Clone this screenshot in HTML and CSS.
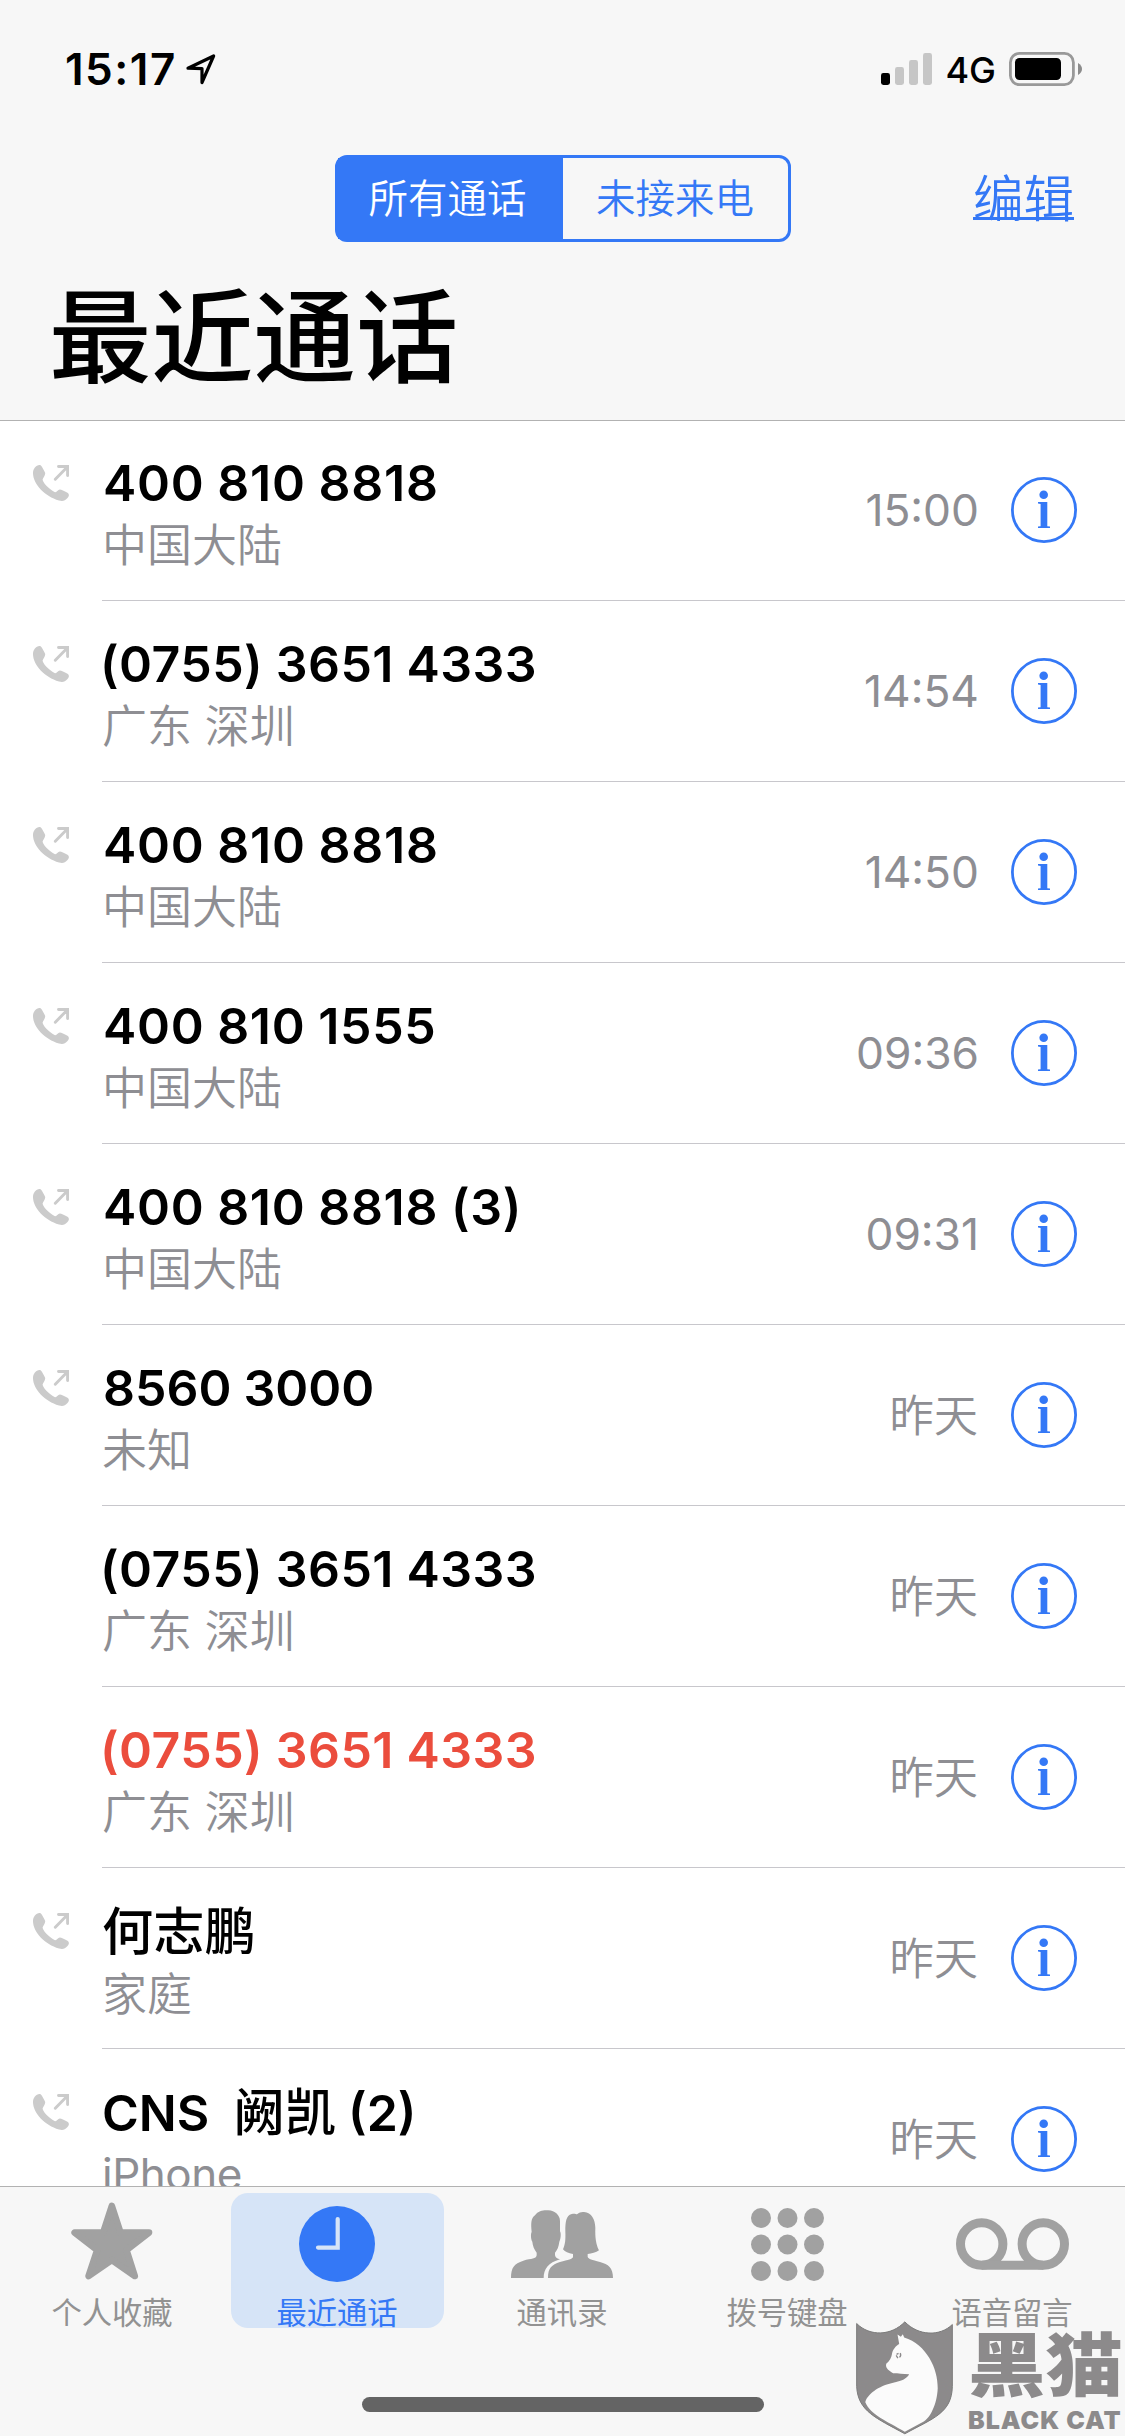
FILE: index.html
```
<!DOCTYPE html>
<html lang="zh-CN">
<head>
<meta charset="utf-8">
<title>最近通话</title>
<link rel="stylesheet" href="styles.css">
</head>
<body>
<svg class="defs" aria-hidden="true">
  <symbol id="outgoing" viewBox="0 0 36 36">
    <path fill="#cbcbcb" d="M0 8C0 4 3 0 6.5 0C8.5 0 9 2 12 7.5C13 9.8 10 12.5 9.6 14.5C9.5 17 15 23.5 22 27.3C23.5 27.3 25 24.8 26.8 24.5C28.5 24.5 31 26 34.5 27.8C36.4 29 36.3 30.5 34.5 33C32 36 29.5 36.3 26 35.5C12 31.5 0 19 0 8Z"/>
    <path fill="none" stroke="#cbcbcb" stroke-width="2.9" stroke-linecap="round" d="M22.3 14.2L34.5 1.8M25.5 1.5H34.6V10.6"/>
  </symbol>
  <symbol id="info" viewBox="0 0 66 66">
    <circle cx="33" cy="33" r="31.6" fill="none" stroke="#3478f6" stroke-width="2.8"/>
    <circle cx="32.7" cy="17.8" r="4.3" fill="#3478f6"/>
    <path fill="#3478f6" d="M27 25H36.3V49.3L39 49.5V51H27V49.5L29.6 49.3V26.9L27 26.6Z"/>
  </symbol>
</svg>
<div class="phone">
  <header class="header">
    <div class="status">
      <div class="status-left">
        <span class="clock">15:17</span>
        <svg class="location" viewBox="0 0 30 31"><path fill="none" stroke="#000" stroke-width="3.2" stroke-linejoin="round" d="M2 14.2L27.6 2L16 28.5V14.6Z"/></svg>
      </div>
      <div class="status-right">
        <svg class="signal" viewBox="0 0 51 32"><rect y="20" width="9" height="12" rx="2.4"/><g fill="#c6c6c6"><rect x="14" y="14" width="9" height="18" rx="2.4"/><rect x="28" y="7" width="9" height="25" rx="2.4"/><rect x="42" width="9" height="32" rx="2.4"/></g></svg>
        <span class="network">4G</span>
        <svg class="battery" viewBox="0 0 73 34"><rect x="1.4" y="1.4" width="63" height="31.2" rx="9" fill="none" stroke="#999" stroke-width="2.8"/><rect x="6" y="6" width="46" height="22" rx="4.5"/><path fill="#8c8c8c" d="M69 11Q73 13.500 73 17T69 23Z"/></svg>
      </div>
    </div>
    <nav class="nav">
      <div class="segmented">
        <span class="segment segment-on">所有通话</span>
        <span class="segment">未接来电</span>
      </div>
      <a class="edit">编辑</a>
    </nav>
    <h1 class="title">最近通话</h1>
  </header>

  <main class="list">
    <div class="call"><svg class="out"><use href="#outgoing"/></svg><div class="who"><div class="name">400 810 8818</div><div class="place">中国大陆</div></div><span class="time">15:00</span><svg class="info"><use href="#info"/></svg></div>
    <div class="call"><svg class="out"><use href="#outgoing"/></svg><div class="who"><div class="name area">(0755) 3651 4333</div><div class="place">广东 深圳</div></div><span class="time">14:54</span><svg class="info"><use href="#info"/></svg></div>
    <div class="call"><svg class="out"><use href="#outgoing"/></svg><div class="who"><div class="name">400 810 8818</div><div class="place">中国大陆</div></div><span class="time">14:50</span><svg class="info"><use href="#info"/></svg></div>
    <div class="call"><svg class="out"><use href="#outgoing"/></svg><div class="who"><div class="name snug">400 810 1555</div><div class="place">中国大陆</div></div><span class="time">09:36</span><svg class="info"><use href="#info"/></svg></div>
    <div class="call"><svg class="out"><use href="#outgoing"/></svg><div class="who"><div class="name snug">400 810 8818 (3)</div><div class="place">中国大陆</div></div><span class="time">09:31</span><svg class="info"><use href="#info"/></svg></div>
    <div class="call"><svg class="out"><use href="#outgoing"/></svg><div class="who"><div class="name tight">8560 3000</div><div class="place">未知</div></div><span class="time day">昨天</span><svg class="info"><use href="#info"/></svg></div>
    <div class="call"><div class="who"><div class="name area">(0755) 3651 4333</div><div class="place">广东 深圳</div></div><span class="time day">昨天</span><svg class="info"><use href="#info"/></svg></div>
    <div class="call"><div class="who"><div class="name area missed">(0755) 3651 4333</div><div class="place">广东 深圳</div></div><span class="time day">昨天</span><svg class="info"><use href="#info"/></svg></div>
    <div class="call"><svg class="out"><use href="#outgoing"/></svg><div class="who"><div class="name contact"><span class="han">何志鹏</span></div><div class="place">家庭</div></div><span class="time day">昨天</span><svg class="info"><use href="#info"/></svg></div>
    <div class="call"><svg class="out"><use href="#outgoing"/></svg><div class="who"><div class="name contact">CNS&nbsp; <span class="han">阙凯</span> (2)</div><div class="place latin">iPhone</div></div><span class="time day">昨天</span><svg class="info"><use href="#info"/></svg></div>
  </main>

  <footer class="tabbar">
    <div class="tab">
      <div class="icon"><svg class="star" width="82" height="78" viewBox="33 20 247 233"><path fill="#a1a1a1" stroke="#a1a1a1" stroke-width="20" stroke-linejoin="round" d="M156 31L182 111H268L200 164L225 242L156 194L86 242L112 164L44 111H130Z"/></svg></div>
      <span class="label">个人收藏</span>
    </div>
    <div class="tab tab-on">
      <div class="icon"><svg width="76" height="76" viewBox="0 0 76 76"><circle cx="38" cy="38" r="38" fill="#3478f6"/><path fill="none" stroke="#d6e4f7" stroke-width="4.2" stroke-linecap="round" stroke-linejoin="miter" d="M38.700 13V41.600H19"/></svg></div>
      <span class="label">最近通话</span>
    </div>
    <div class="tab">
      <div class="icon"><svg width="102" height="68" viewBox="33 42 306 204"><g fill="#a1a1a1"><path d="M33 246C33 215 42 203 70 194C95 187 108 190 110 178V170C103 160 98 150 97 137C92 130 92 112 95 108C93 85 92 66 105 58C115 42 135 42 145 43C165 44 180 58 180 75V106C184 112 182 130 178 137C176 152 172 162 165 170V178C167 186 172 188 180 190C145 200 131 220 131 246Z"/><path d="M144 246C144 215 155 207 180 198C205 190 218 190 219 182V174C205 172 195 168 189 160C196 145 197 130 196 105C196 80 198 58 215 54C225 52 226 54 231 55C238 49 245 47 252 48C275 50 285 70 286 95C285 125 288 145 297 163C288 170 275 173 263 174V182C266 190 275 190 300 198C325 205 339 215 339 246Z"/></g></svg></div>
      <span class="label">通讯录</span>
    </div>
    <div class="tab">
      <div class="icon"><svg width="73" height="73" viewBox="0 0 73 73" fill="#a1a1a1"><circle cx="10" cy="10" r="10"/><circle cx="36.500" cy="10" r="10"/><circle cx="63" cy="10" r="10"/><circle cx="10" cy="36.500" r="10"/><circle cx="36.500" cy="36.500" r="10"/><circle cx="63" cy="36.500" r="10"/><circle cx="10" cy="63" r="10"/><circle cx="36.500" cy="63" r="10"/><circle cx="63" cy="63" r="10"/></svg></div>
      <span class="label">拨号键盘</span>
    </div>
    <div class="tab">
      <div class="icon"><svg width="113" height="52" viewBox="0 0 113 52" fill="none" stroke="#a1a1a1" stroke-width="9"><circle cx="25.700" cy="26" r="21.200"/><circle cx="87.300" cy="26" r="21.200"/><path d="M25.700 47.200H87.300"/></svg></div>
      <span class="label">语音留言</span>
    </div>
    <div class="home"></div>
  </footer>

  <div class="watermark">
    <svg width="97" height="114" viewBox="18 18 292 342">
      <path fill="#8c8a8b" stroke="#7b7b7b" stroke-width="3" d="M20 25C60 65 125 62 165 20C205 62 270 65 308 28V215C306 295 250 310 165 357C80 310 24 290 20 215Z"/>
      <path fill="#fbfbfb" d="M46 262C50 240 85 212 130 203C155 199 170 192 178 178C160 176 145 178 130 175C120 168 105 160 109 146C120 137 125 125 126 118C128 105 138 92 148 87L143 58L153 65L159 57L163 67C230 88 265 160 264 220C262 270 240 310 222 320L165 351C110 318 62 300 46 262Z"/>
      <path fill="none" stroke="#8c8a8b" stroke-width="4" d="M139 121L144 129M151 114Q155 121 149 127M140 118L146 115"/>
    </svg>
    <div class="brand"><span class="brand-han">黑猫</span><span class="brand-latin">BLACK CAT</span></div>
  </div>
</div>
</body>
</html>
```
FILE: styles.css
```
* { box-sizing: border-box; }
body { margin: 0; background: #fff; color: #000; font-family: Inter, "Noto Sans CJK SC", sans-serif; }
svg { display: block; flex: none; }
.defs { position: absolute; width: 0; height: 0; }
.phone { position: relative; display: flex; flex-direction: column; width: 1125px; height: 2436px; overflow: hidden; }

.header { height: 421px; flex: none; background: #f7f7f7; border-bottom: 1px solid #b2b2b2; }
.status { display: flex; justify-content: space-between; align-items: center; height: 132px; padding: 6px 43px 0 65px; }
.status-left, .status-right { display: flex; align-items: center; }
.clock { font-size: 44px; font-weight: 600; letter-spacing: 1.5px; line-height: 60px; }
.location { width: 30px; height: 31px; margin-left: 9px; }
.signal { width: 51px; height: 32px; }
.network { font-size: 36px; font-weight: 450; line-height: 44px; margin: 2px 13px 0 13px; }
.battery { width: 73px; height: 34px; }

.nav { display: grid; grid-template-columns: 1fr 456px 1fr; align-items: center; height: 133px; padding: 0 51px; }
.segmented { grid-column: 2; display: grid; grid-template-columns: 1fr 1fr; height: 87px; border: 3px solid #3478f6; border-radius: 12px; }
.segment { display: flex; align-items: center; justify-content: center; color: #3478f6; font-size: 39.5px; font-weight: 350; line-height: 60px; }
.segment-on { background: #3478f6; color: #fff; padding-right: 5px; }
.edit { justify-self: end; color: #3478f6; font-size: 50.5px; font-weight: 350; line-height: 60px; text-decoration: underline; text-decoration-thickness: 3px; text-underline-offset: 0; text-decoration-skip-ink: none; }
.title { margin: 0; padding: 3px 0 0 49px; font-size: 102.3px; font-weight: 500; line-height: 140px; }

.list { flex: 1; min-height: 0; overflow: hidden; margin-top: -1px; }
.call { display: grid; grid-template-columns: 102px 1fr auto 147px; height: 181px; }
.out { grid-column: 1; grid-row: 1; width: 36px; height: 36px; margin: 45px 0 0 33px; }
.who { grid-column: 2 / 5; grid-row: 1; padding-top: 32px; border-bottom: 1px solid #c8c7cc; }
.name { margin-left: 1px; font-size: 50px; font-weight: 600; line-height: 62px; letter-spacing: .75px; word-spacing: -.5px; white-space: nowrap; }
.area { margin-left: -2px; letter-spacing: .45px; }
.snug { letter-spacing: .7px; }
.tight { letter-spacing: 0; }
.contact { margin-left: 0; letter-spacing: 0; }
.missed { color: #eb4d3d; }
.han { font-size: 51.2px; font-weight: 500; }
.place { margin-top: 2px; font-size: 45px; font-weight: 350; line-height: 60px; color: #8e8e93; }
.latin { margin-top: 0; font-size: 44px; font-weight: 400; letter-spacing: -.5px; }
.time { grid-column: 3; grid-row: 1; align-self: center; margin: 0 -1px 2px 0; font-size: 44.3px; font-weight: 400; line-height: 60px; letter-spacing: 0; color: #8e8e93; }
.day { margin: 0; font-weight: 350; }
.info { grid-column: 4; grid-row: 1; width: 66px; height: 66px; margin: 57px 0 0 33px; }

.tabbar { height: 250px; flex: none; display: grid; grid-template-columns: repeat(5, 1fr); grid-template-rows: 135px 1fr; padding-top: 6px; background: #f7f7f7; border-top: 1px solid #b2b2b2; justify-items: center; }
.tab { display: flex; flex-direction: column; align-items: center; width: 213px; height: 135px; border-radius: 17px; }
.tab-on { background: #d6e4f7; }
.icon { flex: none; height: 102px; padding-right: 1px; display: flex; align-items: center; justify-content: center; }
.star { margin-bottom: 7px; }
.label { flex: none; padding-right: 1px; font-size: 30.3px; font-weight: 400; line-height: 36px; color: #929292; }
.tab-on .label { color: #3478f6; }
.home { grid-column: 1 / 6; align-self: end; width: 402px; height: 15px; margin-bottom: 24px; border-radius: 8px; background: #646464; }

.watermark { position: absolute; left: 856px; top: 2321px; display: flex; gap: 15px; color: #8c8a8b; }
.brand { display: flex; flex-direction: column; }
.brand-han { padding-top: 7px; font-size: 77.5px; font-weight: 900; line-height: 77px; white-space: nowrap; transform: scaleY(.9); }
.brand-latin { font-size: 25px; font-weight: 900; line-height: 30px; letter-spacing: 1px; white-space: nowrap; }
```
